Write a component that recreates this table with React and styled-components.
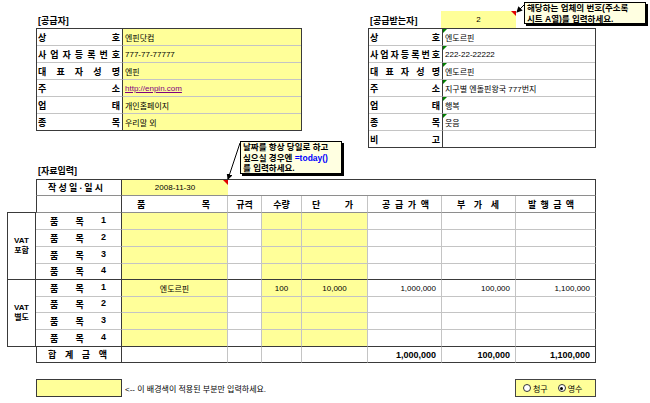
import React from "react";
import styled, { createGlobalStyle } from "styled-components";

const DARK = "#3a3a3a";
const MID = "#8e8e8e";
const LIGHT = "#c4c4c4";
const YELLOW = "#ffff99";
const FONT = `"Liberation Sans", "Noto Sans CJK KR", sans-serif`;

const Global = createGlobalStyle`
  html, body { margin: 0; padding: 0; background: #fff; }
  body { font-family: ${FONT}; font-size: 8px; color: #000; }
`;

const Page = styled.div`
  position: relative;
  width: 650px;
  height: 403px;
  padding: 11px 0 0 7px;
  box-sizing: border-box;
  overflow: hidden;
`;

/* ---------- top: supplier / receiver ---------- */
const TopSection = styled.div`
  display: flex;
  gap: 66px;
  padding-left: 29px;
`;

const Panel = styled.div`
  width: ${(p) => p.$w}px;
  display: flex;
  flex-direction: column;
`;

const TitleRow = styled.div`
  height: 17px;
  display: flex;
`;

const Title = styled.div`
  width: ${(p) => (p.$w ? `${p.$w}px` : "auto")};
  display: flex;
  align-items: center;
  padding: 2px 0 0 2px;
  font-size: 9px;
  font-weight: bold;
  box-sizing: border-box;
`;

const KeyCell = styled.div`
  position: relative;
  width: 75px;
  background: ${YELLOW};
  display: flex;
  align-items: center;
  justify-content: center;
`;

const InfoTable = styled.div`
  display: grid;
  grid-template-columns: ${(p) => p.$label}px 1fr;
  border-top: 1px solid ${DARK};
  border-left: 1px solid ${DARK};
  border-right: 1px solid ${DARK};
`;

const InfoLabel = styled.div`
  height: 17px;
  box-sizing: border-box;
  border-right: 1px solid ${DARK};
  border-bottom: 1px solid ${(p) => (p.$last ? DARK : LIGHT)};
  display: flex;
  align-items: center;
  padding: 0 2px 0 1px;
  font-size: 9px;
  font-weight: bold;
`;

const InfoValue = styled.div`
  position: relative;
  height: 17px;
  box-sizing: border-box;
  border-bottom: 1px solid ${(p) => (p.$last ? DARK : LIGHT)};
  background: ${(p) => (p.$fill ? YELLOW : "#fff")};
  display: flex;
  align-items: center;
  padding-left: 2px;
  white-space: nowrap;
`;

const Link = styled.a`
  color: #800080;
  text-decoration: underline;
`;

const RedMark = styled.span`
  position: absolute;
  top: 0;
  right: 0;
  width: 0;
  height: 0;
  border-top: 5px solid #e00000;
  border-left: 5px solid transparent;
`;

const GreenMark = styled.span`
  position: absolute;
  top: 0;
  left: 0;
  width: 0;
  height: 0;
  border-top: 4px solid #008000;
  border-right: 4px solid transparent;
`;

const SpreadBox = styled.span`
  display: flex;
  justify-content: space-between;
  width: 100%;
`;

function Spread({ text }) {
  return (
    <SpreadBox>
      {[...text].map((c, i) => (
        <span key={i}>{c}</span>
      ))}
    </SpreadBox>
  );
}

/* ---------- data table ---------- */
const DataTitle = styled.div`
  height: 17px;
  margin-top: 14px;
  padding-left: 31px;
  display: flex;
  align-items: center;
  font-size: 9px;
  font-weight: bold;
`;

const DataTable = styled.div`
  display: grid;
  width: 589px;
  grid-template-columns: 29px 86px 106px 34px 40px 66px 74px 74px 80px;
  grid-template-rows: 17px 17px 17px 17px 17px 16px 17px 16px 17px 17px 16px;
`;

const line = (v) =>
  v === "d"
    ? `1px solid ${DARK}`
    : v === "m"
    ? `1px solid ${MID}`
    : v === "l"
    ? `1px solid ${LIGHT}`
    : "none";

const Cell = styled.div`
  position: relative;
  box-sizing: border-box;
  grid-column: span ${(p) => p.$span || 1};
  grid-row: span ${(p) => p.$rows || 1};
  background: ${(p) => (p.$fill ? YELLOW : "transparent")};
  border-top: ${(p) => line(p.$t)};
  border-right: ${(p) => line(p.$r)};
  border-bottom: ${(p) => line(p.$b)};
  border-left: ${(p) => line(p.$l)};
  display: flex;
  align-items: center;
  justify-content: ${(p) =>
    p.$align === "right" ? "flex-end" : p.$align === "left" ? "flex-start" : "center"};
  padding: 0 ${(p) => p.$pr ?? 3}px 0 ${(p) => p.$pl ?? 3}px;
  font-size: ${(p) => (p.$bold ? 9 : 8)}px;
  font-weight: ${(p) => (p.$bold ? "bold" : "normal")};
  white-space: nowrap;
`;

const VatLabel = styled.div`
  display: flex;
  flex-direction: column;
  align-items: center;
  line-height: 10px;
  font-weight: bold;
`;

/* ---------- footer ---------- */
const Footer = styled.div`
  width: 589px;
  height: 18px;
  margin-top: 16px;
  padding-left: 29px;
  box-sizing: border-box;
  display: flex;
  align-items: center;
`;

const Swatch = styled.div`
  width: 86px;
  height: 18px;
  box-sizing: border-box;
  background: ${YELLOW};
  border: 1px solid ${DARK};
`;

const Note = styled.span`
  margin-left: 3px;
  font-size: 8px;
`;

const RadioBox = styled.div`
  margin-left: auto;
  width: 81px;
  height: 18px;
  box-sizing: border-box;
  background: ${YELLOW};
  border: 1px solid #444;
  display: flex;
  align-items: center;
  padding-left: 7px;
  gap: 10px;
`;

const RadioOpt = styled.span`
  display: inline-flex;
  align-items: center;
  gap: 2px;
`;

const RadioDot = styled.span`
  position: relative;
  width: 8px;
  height: 8px;
  box-sizing: border-box;
  border-radius: 50%;
  border: 1px solid #333;
  background: #fff;
  &::after {
    content: "";
    display: ${(p) => (p.$on ? "block" : "none")};
    position: absolute;
    inset: 1.5px;
    border-radius: 50%;
    background: #000;
  }
`;

/* ---------- overlays ---------- */
const Callout = styled.div`
  position: absolute;
  left: ${(p) => p.$x}px;
  top: ${(p) => p.$y}px;
  width: ${(p) => p.$w}px;
  height: ${(p) => p.$h}px;
  box-sizing: border-box;
  background: #ffffe1;
  border: 1px solid #000;
  box-shadow: 2px 2px 0 #000;
  padding: 0 2px;
  font-weight: bold;
  font-size: 8.5px;
  line-height: 10.5px;
  white-space: nowrap;
`;

const Blue = styled.span`
  color: #0000ff;
`;

const Leaders = styled.svg`
  position: absolute;
  left: 0;
  top: 0;
  pointer-events: none;
`;

const supplier = [
  ["상호", "엔핀닷컴"],
  ["사업자등록번호", "777-77-77777"],
  ["대표자성명", "엔핀"],
  ["주소", "link"],
  ["업태", "개인홈페이지"],
  ["종목", "우리말 외"],
];

const receiver = [
  ["상호", "엔도르핀"],
  ["사업자등록번호", "222-22-22222"],
  ["대표자성명", "엔도르핀"],
  ["주소", "지구별 엔돌핀왕국 777번지"],
  ["업태", "행복"],
  ["종목", "웃음"],
  ["비고", ""],
];

const groups = [
  { label: ["VAT", "포함"], rows: [{}, {}, {}, {}] },
  {
    label: ["VAT", "별도"],
    rows: [
      {
        name: "엔도르핀",
        qty: "100",
        price: "10,000",
        supply: "1,000,000",
        vat: "100,000",
        total: "1,100,000",
      },
      {},
      {},
      {},
    ],
  },
];

export default function App() {
  return (
    <>
      <Global />
      <Page>
        <TopSection>
          <Panel $w={266}>
            <TitleRow>
              <Title>[공급자]</Title>
            </TitleRow>
            <InfoTable $label={86}>
              {supplier.map(([k, v], i) => {
                const last = i === supplier.length - 1;
                return (
                  <React.Fragment key={k}>
                    <InfoLabel $last={last}>
                      <Spread text={k} />
                    </InfoLabel>
                    <InfoValue $fill $last={last}>
                      {v === "link" ? <Link>http://enpin.com</Link> : v}
                    </InfoValue>
                  </React.Fragment>
                );
              })}
            </InfoTable>
          </Panel>
          <Panel $w={228}>
            <TitleRow>
              <Title $w={73}>[공급받는자]</Title>
              <KeyCell>
                2<RedMark />
              </KeyCell>
            </TitleRow>
            <InfoTable $label={74}>
              {receiver.map(([k, v], i) => {
                const last = i === receiver.length - 1;
                return (
                  <React.Fragment key={k}>
                    <InfoLabel $last={last}>
                      <Spread text={k} />
                    </InfoLabel>
                    <InfoValue $last={last}>
                      {k !== "비고" && <GreenMark />}
                      {v}
                    </InfoValue>
                  </React.Fragment>
                );
              })}
            </InfoTable>
          </Panel>
        </TopSection>

        <DataTitle>[자료입력]</DataTitle>
        <DataTable>
          {/* date row */}
          <Cell />
          <Cell $t="d" $l="d" $r="d" $b="m" $bold $pl={11} $pr={18}>
            <Spread text="작성일.일시" />
          </Cell>
          <Cell $t="d" $b="m" $fill>
            2008-11-30
            <RedMark />
          </Cell>
          <Cell $span={6} $t="d" $r="d" $b="m" />

          {/* header row */}
          <Cell $b="d" />
          <Cell $l="d" $r="d" $b="m" />
          <Cell $r="l" $b="m" $bold $pl={15} $pr={17}>
            <Spread text="품목" />
          </Cell>
          <Cell $r="l" $b="m" $bold>
            규격
          </Cell>
          <Cell $r="l" $b="m" $bold>
            수량
          </Cell>
          <Cell $r="l" $b="m" $bold $pl={10} $pr={14}>
            <Spread text="단가" />
          </Cell>
          <Cell $r="l" $b="m" $bold $pl={14} $pr={12}>
            <Spread text="공급가액" />
          </Cell>
          <Cell $r="l" $b="m" $bold $pl={15} $pr={16}>
            <Spread text="부가세" />
          </Cell>
          <Cell $r="d" $b="m" $bold $pl={12} $pr={21}>
            <Spread text="발행금액" />
          </Cell>

          {groups.map((g, gi) =>
            g.rows.map((r, i) => {
              const b = i === 3 ? "d" : "l";
              return (
                <React.Fragment key={`${gi}-${i}`}>
                  {i === 0 && (
                    <Cell $rows={4} $l="d" $r="d" $b="d">
                      <VatLabel>
                        <span>{g.label[0]}</span>
                        <span>{g.label[1]}</span>
                      </VatLabel>
                    </Cell>
                  )}
                  <Cell $r="d" $b={b} $bold $pl={14} $pr={15}>
                    <Spread text={`품목${i + 1}`} />
                  </Cell>
                  <Cell $fill $r="l" $b={b}>
                    {r.name}
                  </Cell>
                  <Cell $r="l" $b={b} />
                  <Cell $fill $r="l" $b={b}>
                    {r.qty}
                  </Cell>
                  <Cell $fill $r="l" $b={b}>
                    {r.price}
                  </Cell>
                  <Cell $r="l" $b={b} $align="right" $pr={5}>
                    {r.supply}
                  </Cell>
                  <Cell $r="l" $b={b} $align="right" $pr={5}>
                    {r.vat}
                  </Cell>
                  <Cell $r="d" $b={b} $align="right" $pr={5}>
                    {r.total}
                  </Cell>
                </React.Fragment>
              );
            })
          )}

          {/* total row */}
          <Cell />
          <Cell $l="d" $r="d" $b="d" $bold $pl={11} $pr={14}>
            <Spread text="합계금액" />
          </Cell>
          <Cell $r="l" $b="d" />
          <Cell $r="l" $b="d" />
          <Cell $r="l" $b="d" />
          <Cell $r="l" $b="d" />
          <Cell $r="l" $b="d" $align="right" $pr={5} $bold>
            1,000,000
          </Cell>
          <Cell $r="l" $b="d" $align="right" $pr={5} $bold>
            100,000
          </Cell>
          <Cell $r="d" $b="d" $align="right" $pr={5} $bold>
            1,100,000
          </Cell>
        </DataTable>

        <Footer>
          <Swatch />
          <Note>&lt;-- 이 배경색이 적용된 부분만 입력하세요.</Note>
          <RadioBox>
            <RadioOpt>
              <RadioDot />
              청구
            </RadioOpt>
            <RadioOpt>
              <RadioDot $on />
              영수
            </RadioOpt>
          </RadioBox>
        </Footer>

        <Leaders width="650" height="403" viewBox="0 0 650 403">
          <defs>
            <marker
              id="ah"
              markerWidth="6"
              markerHeight="6"
              refX="5"
              refY="3"
              orient="auto"
              markerUnits="userSpaceOnUse"
            >
              <path d="M0,0 L6,3 L0,6 z" fill="#000" />
            </marker>
          </defs>
          <line x1="525" y1="4" x2="517" y2="12" stroke="#000" strokeWidth="1" markerEnd="url(#ah)" />
          <line x1="240" y1="143" x2="228" y2="179" stroke="#000" strokeWidth="1" markerEnd="url(#ah)" />
        </Leaders>

        <Callout $x={524} $y={2} $w={122} $h={22}>
          해당하는 업체의 번호(주소록
          <br />
          시트 A열)를 입력하세요.
        </Callout>
        <Callout $x={240} $y={141} $w={102} $h={33}>
          날짜를 항상 당일로 하고
          <br />
          싶으실 경우엔 <Blue>=today()</Blue>
          <br />를 입력하세요.
        </Callout>
      </Page>
    </>
  );
}
